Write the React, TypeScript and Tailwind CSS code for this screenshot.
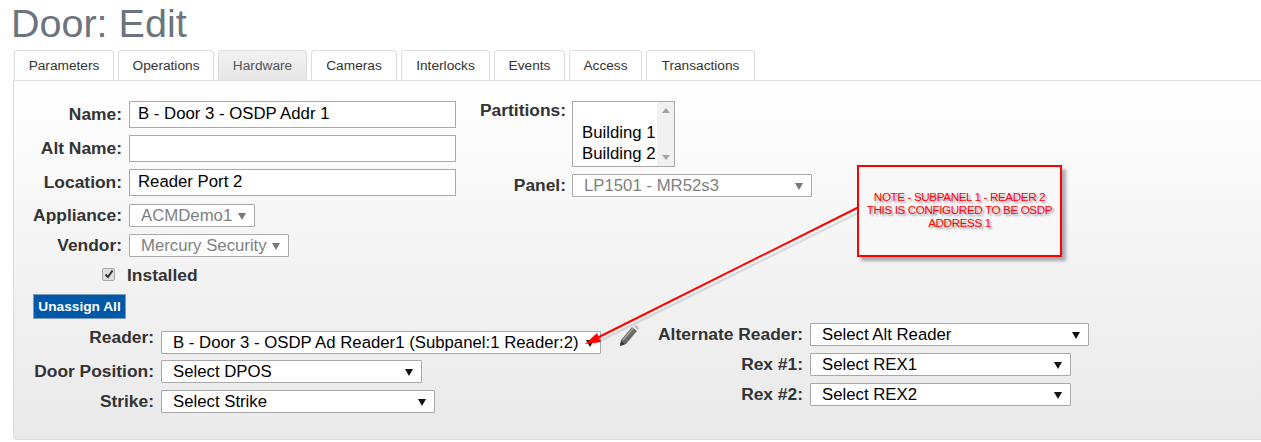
import { ReactNode } from "react";

const tabs = [
  { name: "Parameters", w: "w-[100px]" },
  { name: "Operations", w: "w-[96px]" },
  { name: "Hardware", w: "w-[89px]" },
  { name: "Cameras", w: "w-[86px]" },
  { name: "Interlocks", w: "w-[89px]" },
  { name: "Events", w: "w-[71px]" },
  { name: "Access", w: "w-[73px]" },
  { name: "Transactions", w: "w-[109px]" },
];

const Caret = ({ muted }: { muted?: boolean }) => (
  <svg width="8" height="8" viewBox="0 0 8 8" className="shrink-0">
    <path d="M0 1h8L4 8z" fill={muted ? "#777" : "#111"} />
  </svg>
);

const Label = ({ width, children }: { width: string; children: ReactNode }) => (
  <div className={`${width} shrink-0 pb-[2px] text-right font-bold text-[17.4px] text-[#333] leading-[20px] whitespace-nowrap`}>{children}</div>
);

const Picker = ({ width, text, muted, pad }: { width: string; text: string; muted?: boolean; pad?: string }) => (
  <div
    className={`${width} h-[23px] shrink-0 flex items-center justify-between bg-white border rounded-[1px] text-[16.75px] leading-[20px] ${
      muted ? "border-[#aaa] text-[#808080] pl-[11px] pr-[8px]" : `border-[#a9a9a9] text-black pl-[11px] ${pad ?? "pr-[8px]"}`
    }`}
  >
    <span className="whitespace-nowrap">{text}</span>
    <Caret muted={muted} />
  </div>
);

const TextRow = ({ label, value }: { label: string; value: string }) => (
  <div className="flex items-center gap-[7px] h-[27px]">
    <Label width="w-[89px]">{label}</Label>
    <div className="w-[327px] h-[27px] bg-white border border-[#a9a9a9] px-[8px] text-[16.75px] leading-[24px] text-black">{value}</div>
  </div>
);

export default function App() {
  return (
    <div className="relative w-[1261px] h-[442px] overflow-hidden bg-white font-['Liberation_Sans',Arial,sans-serif]">
      <h1 className="pl-[11px] pt-[1px] h-[50px] text-[39.5px] leading-[44px] text-[#6c757d] font-normal">Door: Edit</h1>

      <div className="flex gap-[4px] pl-[14px] h-[30px] items-stretch">
        {tabs.map((t, i) => (
          <div
            key={t.name}
            className={`${t.w} text-center border border-b-0 border-[#ddd] rounded-t-[4px] text-[13.7px] leading-[30px] ${
              i === 2 ? "bg-gradient-to-b from-[#f2f2f2] to-[#e6e6e6] text-[#555]" : "bg-white text-[#333]"
            }`}
          >
            {t.name}
          </div>
        ))}
      </div>

      <div className="ml-[13px] h-[360px] border border-[#ddd] border-r-0 rounded-bl-[4px] bg-gradient-to-b from-white to-[#e9e9e9] pl-[19px] pt-[20px]">
        <div className="flex">
          <div className="flex flex-col w-[441px]">
            <div className="flex flex-col gap-[7px]">
              <TextRow label="Name:" value="B - Door 3 - OSDP Addr 1" />
              <TextRow label="Alt Name:" value="" />
              <TextRow label="Location:" value="Reader Port 2" />
            </div>
            <div className="flex items-center gap-[7px] mt-[8px]">
              <Label width="w-[89px]">Appliance:</Label>
              <Picker width="w-[126px]" text="ACMDemo1" muted />
            </div>
            <div className="flex items-center gap-[7px] mt-[7px]">
              <Label width="w-[89px]">Vendor:</Label>
              <Picker width="w-[160px]" text="Mercury Security" muted />
            </div>
            <div className="flex items-center mt-[8px] ml-[69px] h-[20px]">
              <div className="w-[13px] h-[13px] rounded-[2px] bg-[#ddd] border border-[#aaa] flex items-center justify-center -mt-[2px]">
                <svg width="10" height="10" viewBox="0 0 10 10">
                  <path d="M1.5 5.5 4 8l4.5-6.5" fill="none" stroke="#333" strokeWidth="2" />
                </svg>
              </div>
              <span className="ml-[12px] font-bold text-[17.4px] text-[#333]">Installed</span>
            </div>
          </div>
          <div className="flex flex-col">
            <div className="flex gap-[6px]">
              <div className="-mt-[1px]">
                <Label width="w-[92px]">Partitions:</Label>
              </div>
              <div className="w-[103px] h-[66px] bg-white border border-[#a9a9a9] flex">
                <div className="flex-1 pt-[20px] pl-[9px] text-[16.75px] leading-[21px] text-black whitespace-nowrap">
                  <div>Building 1</div>
                  <div>Building 2</div>
                </div>
                <div className="w-[17px] bg-[#f1f1f1] flex flex-col items-center justify-between py-[6px]">
                  <svg width="8" height="5" viewBox="0 0 8 5"><path d="M4 0l4 5H0z" fill="#a3a3a3" /></svg>
                  <svg width="8" height="5" viewBox="0 0 8 5"><path d="M0 0h8L4 5z" fill="#a3a3a3" /></svg>
                </div>
              </div>
            </div>
            <div className="flex items-center gap-[6px] mt-[7px]">
              <Label width="w-[92px]">Panel:</Label>
              <Picker width="w-[240px]" text="LP1501 - MR52s3" muted />
            </div>
          </div>
        </div>

        <button className="block mt-[9px] w-[93px] h-[25px] bg-[#0059a8] border border-[#7a9cc0] text-white font-bold text-[13.7px] leading-[23px] text-center">
          Unassign All
        </button>

        <div className="flex">
          <div className="flex flex-col w-[611px]">
            <div className="flex gap-[7px] mt-[12px] items-start">
              <div className="-mt-[4px]">
                <Label width="w-[121px]">Reader:</Label>
              </div>
              <Picker width="w-[440px]" text="B - Door 3 - OSDP Ad Reader1 (Subpanel:1 Reader:2)" pad="pr-[6px]" />
              <div className="ml-[10px] mt-[-8px]">
                <svg width="22" height="24" viewBox="0 0 22 24">
                  <path d="M3 17 14 4l5 4L8 21l-6 2z" fill="#6b6b6b" />
                  <path d="M5 17 15 5.5" stroke="#aaa" strokeWidth="1.2" />
                  <path d="M2 23l1-5 4 3z" fill="#333" />
                  <path d="M16 3l2-1 3 3-1 2z" fill="#bbb" />
                </svg>
              </div>
            </div>
            <div className="flex gap-[7px] mt-[6px] items-center">
              <Label width="w-[121px]">Door Position:</Label>
              <Picker width="w-[261px]" text="Select DPOS" />
            </div>
            <div className="flex gap-[7px] mt-[7px] items-center">
              <Label width="w-[121px]">Strike:</Label>
              <Picker width="w-[274px]" text="Select Strike" />
            </div>
          </div>
          <div className="flex flex-col gap-[7px] mt-[4px] ml-[-2px]">
            <div className="flex items-center gap-[7px]">
              <Label width="w-[161px]">Alternate Reader:</Label>
              <Picker width="w-[279px]" text="Select Alt Reader" />
            </div>
            <div className="flex items-center gap-[7px]">
              <Label width="w-[161px]">Rex #1:</Label>
              <Picker width="w-[261px]" text="Select REX1" />
            </div>
            <div className="flex items-center gap-[7px]">
              <Label width="w-[161px]">Rex #2:</Label>
              <Picker width="w-[261px]" text="Select REX2" />
            </div>
          </div>
        </div>
      </div>

      {/* annotation on top of the form */}
      <svg className="absolute left-0 top-0 pointer-events-none" width="1261" height="442" viewBox="0 0 1261 442">
        <path d="M860 209 L592 342" stroke="#888" strokeOpacity="0.25" strokeWidth="2" transform="translate(2 2)" />
        <path d="M859 207 L595 339" stroke="#ff0000" strokeWidth="2" />
        <path d="M585 344 L597 333 L601 342z" fill="#ff0000" />
      </svg>
      <div className="absolute left-[857px] top-[165px] w-[205px] h-[92px] border-[2px] border-[#ff0000] shadow-[4px_4px_3px_rgba(120,120,130,0.6)] bg-[#f8f8f8] flex flex-col items-center pt-[23px]">
        <div className="text-[11.7px] leading-[13px] tracking-[-0.4px] text-[#ff0000] text-center whitespace-nowrap [text-shadow:2px_2px_2px_rgba(90,90,120,0.6)]">
          NOTE - SUBPANEL 1 - READER 2
          <br />
          THIS IS CONFIGURED TO BE OSDP
          <br />
          ADDRESS 1
        </div>
      </div>
    </div>
  );
}
